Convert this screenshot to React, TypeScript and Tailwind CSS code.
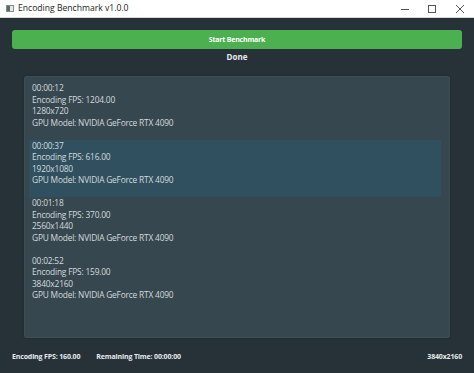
import React from "react";

const items = [
  { t: "00:00:12", fps: "1204.00", res: "1280x720" },
  { t: "00:00:37", fps: "616.00", res: "1920x1080", sel: true },
  { t: "00:01:18", fps: "370.00", res: "2560x1440" },
  { t: "00:02:52", fps: "159.00", res: "3840x2160" },
];

export default function App() {
  return (
    <div
      className="w-[474px] h-[373px] flex flex-col bg-[#263238] overflow-hidden"
      style={{ fontFamily: '"Open Sans", "Noto Sans", sans-serif' }}
    >
      {/* title bar */}
      <div className="h-[18px] bg-white flex items-center shrink-0 border-b border-[#d8d8d8]">
        <div className="ml-[6px] w-[8px] h-[7px] border border-[#8a8a8a] bg-[#e8e8e8] flex items-start">
          <div className="w-[3px] h-[5px] bg-[#5a6a6a]" />
        </div>
        <span className="ml-[4px] text-[8.6px] leading-none text-[#222]">Encoding Benchmark v1.0.0</span>
        <div className="flex-1" />
        <svg width="10" height="10" viewBox="0 0 10 10" className="mr-[17px]">
          <line x1="1" y1="5.5" x2="9" y2="5.5" stroke="#555" strokeWidth="1" />
        </svg>
        <svg width="10" height="10" viewBox="0 0 10 10" className="mr-[18px]">
          <rect x="1.5" y="1.5" width="7" height="7" fill="none" stroke="#555" strokeWidth="1" />
        </svg>
        <svg width="10" height="10" viewBox="0 0 10 10" className="mr-[9px]">
          <line x1="1" y1="1" x2="9" y2="9" stroke="#555" strokeWidth="1" />
          <line x1="9" y1="1" x2="1" y2="9" stroke="#555" strokeWidth="1" />
        </svg>
      </div>

      {/* content */}
      <div className="flex-1 flex flex-col px-[12px] pt-[12px]">
        <button className="h-[19px] w-full rounded-[3px] bg-[#4caf50] text-white font-bold text-[7px] tracking-[-0.2px] leading-none flex items-center justify-center">
          Start Benchmark
        </button>
        <div className="h-[16px] flex items-center justify-center text-[#e6eaec] font-bold text-[8px]">Done</div>

        <div className="mt-[11px] mx-[12px] h-[262px] bg-[#37474f] rounded-[2px] border border-[#3e4d54] shadow-[0_0_2px_rgba(0,0,0,0.3)] pl-[4px] pr-[8px] pt-[5px]">
          {items.map((it) => (
            <div
              key={it.t}
              className={`pl-[3px] text-[8.4px] tracking-[-0.2px] leading-[11.5px] text-[#d3dadd] ${it.sel ? "bg-[#30505f]" : ""}`}
            >
              <div>{it.t}</div>
              <div>Encoding FPS: {it.fps}</div>
              <div>{it.res}</div>
              <div>GPU Model: NVIDIA GeForce RTX 4090</div>
              <div>&nbsp;</div>
            </div>
          ))}
        </div>

        <div className="flex-1 flex items-center pt-[3px] text-[7px] tracking-[-0.15px] font-bold text-[#e6eaec]">
          <span>Encoding FPS: 160.00</span>
          <span className="ml-[16px]">Remaining Time: 00:00:00</span>
          <span className="ml-auto">3840x2160</span>
        </div>
      </div>
    </div>
  );
}
